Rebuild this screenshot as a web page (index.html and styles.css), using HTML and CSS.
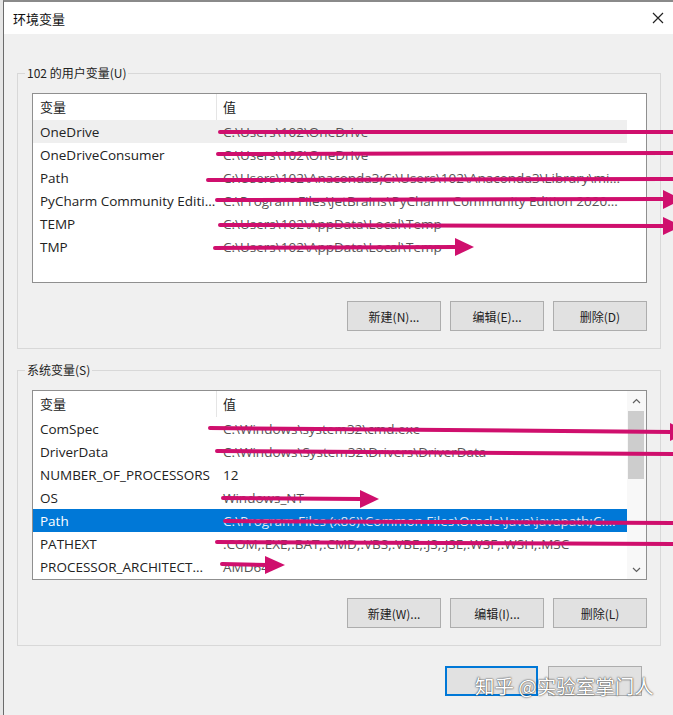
FILE: index.html
```html
<!DOCTYPE html>
<html lang="zh-CN">
<head>
<meta charset="utf-8">
<title>环境变量</title>
<link rel="stylesheet" href="styles.css">
</head>
<body>
<div class="window">
  <div class="titlebar">
    <span class="title">环境变量</span>
    <svg class="close" width="12" height="12" viewBox="0 0 12 12"><path d="M1 1 L11 11 M11 1 L1 11" stroke="#222" stroke-width="1.2" fill="none"/></svg>
  </div>
  <div class="content">
    <fieldset class="group">
      <legend>102 的用户变量(U)</legend>
      <div class="listbox">
        <div class="table">
          <div class="row head"><div class="c1">变量</div><div class="c2">值</div></div>
          <div class="row hover"><div class="c1">OneDrive</div><div class="c2">C:\Users\102\OneDrive</div></div>
          <div class="row"><div class="c1">OneDriveConsumer</div><div class="c2">C:\Users\102\OneDrive</div></div>
          <div class="row"><div class="c1">Path</div><div class="c2">C:\Users\102\Anaconda3;C:\Users\102\Anaconda3\Library\mi...</div></div>
          <div class="row"><div class="c1">PyCharm Community Editi...</div><div class="c2">C:\Program Files\JetBrains\PyCharm Community Edition 2020...</div></div>
          <div class="row"><div class="c1">TEMP</div><div class="c2">C:\Users\102\AppData\Local\Temp</div></div>
          <div class="row"><div class="c1">TMP</div><div class="c2">C:\Users\102\AppData\Local\Temp</div></div>
        </div>
        <div class="side"></div>
      </div>
      <div class="buttons">
        <button class="btn">新建(N)...</button>
        <button class="btn">编辑(E)...</button>
        <button class="btn">删除(D)</button>
      </div>
    </fieldset>

    <fieldset class="group group-sys">
      <legend>系统变量(S)</legend>
      <div class="listbox">
        <div class="table">
          <div class="row head"><div class="c1">变量</div><div class="c2">值</div></div>
          <div class="row"><div class="c1">ComSpec</div><div class="c2">C:\Windows\system32\cmd.exe</div></div>
          <div class="row"><div class="c1">DriverData</div><div class="c2">C:\Windows\System32\Drivers\DriverData</div></div>
          <div class="row"><div class="c1">NUMBER_OF_PROCESSORS</div><div class="c2 plain">12</div></div>
          <div class="row"><div class="c1">OS</div><div class="c2">Windows_NT</div></div>
          <div class="row selected"><div class="c1">Path</div><div class="c2">C:\Program Files (x86)\Common Files\Oracle\Java\javapath;C:...</div></div>
          <div class="row"><div class="c1">PATHEXT</div><div class="c2">.COM;.EXE;.BAT;.CMD;.VBS;.VBE;.JS;.JSE;.WSF;.WSH;.MSC</div></div>
          <div class="row"><div class="c1">PROCESSOR_ARCHITECT...</div><div class="c2">AMD64</div></div>
        </div>
        <div class="scrollbar">
          <div class="arrow"><svg width="9" height="6" viewBox="0 0 9 6"><path d="M1 5 L4.5 1.5 L8 5" stroke="#606060" stroke-width="1.2" fill="none"/></svg></div>
          <div class="thumb"></div>
          <div class="track"></div>
          <div class="arrow"><svg width="9" height="6" viewBox="0 0 9 6"><path d="M1 1 L4.5 4.5 L8 1" stroke="#606060" stroke-width="1.2" fill="none"/></svg></div>
        </div>
      </div>
      <div class="buttons">
        <button class="btn">新建(W)...</button>
        <button class="btn">编辑(I)...</button>
        <button class="btn">删除(L)</button>
      </div>
    </fieldset>

    <div class="dialog-buttons">
      <button class="btn btn-ok" aria-label="确定"></button>
      <button class="btn btn-cancel" aria-label="取消"></button>
    </div>
  </div>
</div>

<svg class="marks" width="673" height="715" viewBox="0 0 673 715">
  <g stroke="#cf0f6d" stroke-width="4" stroke-linecap="round" fill="none">
    <path d="M220 132 L673 132"/>
    <path d="M218 154 L673 153"/>
    <path d="M208 180 L673 179"/>
    <path d="M217 200 L665 199"/>
    <path d="M220 225 L665 226"/>
    <path d="M215 248 L457 247"/>
    <path d="M210 428 L672 432"/>
    <path d="M217 451 L673 454"/>
    <path d="M223 498 L362 499"/>
    <path d="M225 521 L673 523"/>
    <path d="M217 542 L673 544"/>
    <path d="M222 564 L267 565"/>
  </g>
  <g fill="#cf0f6d">
    <polygon points="663,190 682,199.5 663,209"/>
    <polygon points="663,217 682,226 663,235"/>
    <polygon points="455,238 474,247 455,256"/>
    <polygon points="670,423 689,432 670,441"/>
    <polygon points="360,490 379,499 360,508"/>
    <polygon points="265,556 285,565 265,574"/>
  </g>
</svg>
<div class="watermark">知乎 @实验室掌门人</div>
</body>
</html>
```

FILE: styles.css
```css
* {
  box-sizing: border-box;
}

html,
body {
  margin: 0;
  padding: 0;
}

body {
  width: 673px;
  height: 715px;
  overflow: hidden;
  position: relative;
  background: #e6e6e6;
  font-family: "Open Sans", "Noto Sans CJK SC", sans-serif;
  font-size: 13.5px;
  color: #222;
}

.window {
  margin-left: 3px;
  height: 715px;
  border-left: 1px solid #6b6b6b;
  border-top: 2px solid #8a8a8a;
  background: #f0f0f0;
}

.titlebar {
  height: 32px;
  background: #fff;
  display: flex;
  align-items: center;
  justify-content: space-between;
  padding: 0 9px 0 9px;
}

.title {
  font-family: "Noto Sans CJK SC", sans-serif;
  font-size: 13px;
  color: #111;
}

.close {
  display: block;
}

.content {
  padding: 0 12px 0 13px;
}

.group {
  margin: 31px 0 0;
  border: 1px solid #d8d8d8;
  padding: 12px 13px 17px 14px;
  min-width: 0;
}

.group-sys {
  margin-top: 13px;
}

.group legend {
  font-family: "Noto Sans CJK SC", sans-serif;
  font-size: 12px;
  line-height: 16px;
  padding: 0 2px;
  margin-left: -7px;
  color: #222;
}

.listbox {
  height: 190px;
  border: 1px solid #8f8f8f;
  background: #fff;
  display: flex;
}

.table {
  width: 594px;
  flex: none;
}

.side {
  flex: 1;
}

.row {
  display: grid;
  grid-template-columns: 184px 1fr;
  height: 23px;
  line-height: 22px;
  padding-top: 1px;
  white-space: nowrap;
}

.row.head {
  height: 26px;
  line-height: 26px;
  padding-top: 0;
  font-size: 13px;
}

.head .c1 {
  border-right: 1px solid #e5e5e5;
}

.head .c1,
.head .c2 {
  font-family: "Noto Sans CJK SC", sans-serif;
  color: #222;
}

.c1 {
  padding-left: 7px;
  overflow: hidden;
}

.c2 {
  padding-left: 6px;
  overflow: hidden;
  color: #555;
}

.c2.plain {
  color: #222;
}

.row.hover {
  background: #efefef;
}

.row.selected {
  background: #0078d7;
  color: #fff;
}

.row.selected .c2 {
  color: #dfeaf7;
}

.scrollbar {
  width: 19px;
  flex: none;
  display: flex;
  flex-direction: column;
  background: #f8f8f8;
}

.arrow {
  height: 19px;
  display: flex;
  align-items: center;
  justify-content: center;
}

.thumb {
  height: 68px;
  margin: 1px 2px 0 1px;
  background: #cdcdcd;
}

.track {
  flex: 1;
}

.buttons {
  display: flex;
  justify-content: flex-end;
  gap: 9px;
  margin-top: 18px;
}

.btn {
  width: 94px;
  height: 30px;
  border: 1px solid #adadad;
  background: #e1e1e1;
  font-family: "Noto Sans CJK SC", sans-serif;
  font-size: 12px;
  color: #222;
  padding: 0;
}

.dialog-buttons {
  display: flex;
  justify-content: flex-end;
  gap: 10px;
  margin-top: 20px;
  padding-right: 19px;
}

.btn-ok {
  width: 93px;
  border: 1px solid #0078d7;
  box-shadow: inset 0 0 0 1px #0078d7;
}

.marks {
  position: absolute;
  left: 0;
  top: 0;
  pointer-events: none;
}

.watermark {
  position: absolute;
  left: 475px;
  top: 673px;
  font-family: "Noto Sans CJK SC", sans-serif;
  font-size: 19.5px;
  line-height: 26px;
  color: #fff;
  text-shadow: 0 0 2px rgba(0, 0, 0, 0.7), 0 0 1px rgba(0, 0, 0, 0.6);
  white-space: nowrap;
}
```
